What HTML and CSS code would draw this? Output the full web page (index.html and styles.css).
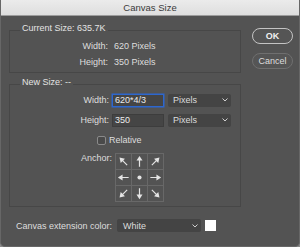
FILE: index.html
```html
<!DOCTYPE html>
<html>
<head>
<meta charset="utf-8">
<link rel="stylesheet" href="styles.css">
</head>
<body>
<div class="window">
  <div class="titlebar">Canvas Size</div>
  <div class="main">
    <div class="left">
      <fieldset class="group current">
        <legend>Current Size: 635.7K</legend>
        <div class="info-row"><span class="lbl">Width:</span><span class="val">620 Pixels</span></div>
        <div class="info-row"><span class="lbl">Height:</span><span class="val">350 Pixels</span></div>
      </fieldset>
      <fieldset class="group newsize">
        <legend>New Size: --</legend>
        <div class="field-row">
          <span class="lbl">Width:</span>
          <div class="input focus">620*4/3</div>
          <div class="select unit"><span>Pixels</span><svg class="chev" viewBox="0 0 6 4" width="6" height="4"><polyline points="0.5,0.5 3,3 5.5,0.5" fill="none" stroke="#cfcfcf" stroke-width="1"/></svg></div>
        </div>
        <div class="field-row">
          <span class="lbl">Height:</span>
          <div class="input">350</div>
          <div class="select unit"><span>Pixels</span><svg class="chev" viewBox="0 0 6 4" width="6" height="4"><polyline points="0.5,0.5 3,3 5.5,0.5" fill="none" stroke="#cfcfcf" stroke-width="1"/></svg></div>
        </div>
        <div class="check-row"><span class="checkbox"></span><span>Relative</span></div>
        <div class="anchor-row">
          <span class="lbl">Anchor:</span>
          <div class="grid">
            <div class="cell"><svg class="arrow r-nw" viewBox="0 0 16 16"><line x1="2.5" y1="8" x2="10" y2="8"/><polygon points="9,4.8 14,8 9,11.2"/></svg></div>
            <div class="cell"><svg class="arrow r-n" viewBox="0 0 16 16"><line x1="2.5" y1="8" x2="10" y2="8"/><polygon points="9,4.8 14,8 9,11.2"/></svg></div>
            <div class="cell"><svg class="arrow r-ne" viewBox="0 0 16 16"><line x1="2.5" y1="8" x2="10" y2="8"/><polygon points="9,4.8 14,8 9,11.2"/></svg></div>
            <div class="cell"><svg class="arrow r-w" viewBox="0 0 16 16"><line x1="2.5" y1="8" x2="10" y2="8"/><polygon points="9,4.8 14,8 9,11.2"/></svg></div>
            <div class="cell"><svg class="arrow" viewBox="0 0 16 16"><circle cx="8" cy="8" r="2.2"/></svg></div>
            <div class="cell"><svg class="arrow" viewBox="0 0 16 16"><line x1="2.5" y1="8" x2="10" y2="8"/><polygon points="9,4.8 14,8 9,11.2"/></svg></div>
            <div class="cell"><svg class="arrow r-sw" viewBox="0 0 16 16"><line x1="2.5" y1="8" x2="10" y2="8"/><polygon points="9,4.8 14,8 9,11.2"/></svg></div>
            <div class="cell"><svg class="arrow r-s" viewBox="0 0 16 16"><line x1="2.5" y1="8" x2="10" y2="8"/><polygon points="9,4.8 14,8 9,11.2"/></svg></div>
            <div class="cell"><svg class="arrow r-se" viewBox="0 0 16 16"><line x1="2.5" y1="8" x2="10" y2="8"/><polygon points="9,4.8 14,8 9,11.2"/></svg></div>
          </div>
        </div>
      </fieldset>
      <div class="ext-row">
        <span class="ext-lbl">Canvas extension color:</span>
        <div class="select ext"><span>White</span><svg class="chev" viewBox="0 0 6 4" width="6" height="4"><polyline points="0.5,0.5 3,3 5.5,0.5" fill="none" stroke="#cfcfcf" stroke-width="1"/></svg></div>
        <span class="swatch"></span>
      </div>
    </div>
    <div class="buttons">
      <button class="btn ok">OK</button>
      <button class="btn cancel">Cancel</button>
    </div>
  </div>
</div>
</body>
</html>
```

FILE: styles.css
```css
html, body {
  margin: 0;
  padding: 0;
  background: #8a8a8a;
}
body {
  font-family: "Liberation Sans", Arial, sans-serif;
  font-size: 9px;
  color: #dedede;
}
.window {
  width: 300px;
  height: 247px;
  box-sizing: border-box;
  background: #535353;
  border: 1px solid #676767;
  border-top: none;
  border-radius: 0 0 5px 5px;
  overflow: hidden;
}
.titlebar {
  height: 15px;
  line-height: 15px;
  text-align: center;
  font-size: 9.5px;
  color: #3a3a3a;
  background: linear-gradient(#ebebeb, #dedede);
  border-bottom: 1px solid #9c9c9c;
  margin: 0 -1px;
}
.main {
  display: flex;
  padding: 7px 0 0 8px;
}
.left {
  width: 232px;
  display: flex;
  flex-direction: column;
}
.group {
  margin: 0;
  padding: 0 6px 2px 10px;
  border: 1px solid #474747;
  min-width: 0;
}
.group legend {
  padding: 0 2px 4px;
  font-size: 9px;
  line-height: 11px;
  color: #e4e4e4;
}
.info-row {
  display: grid;
  grid-template-columns: 88px auto;
  column-gap: 6px;
  height: 15px;
  align-items: center;
  margin-bottom: 1px;
}
.lbl {
  text-align: right;
  white-space: nowrap;
}
.val {
  white-space: nowrap;
}
.newsize {
  margin-top: 4px;
  padding-top: 1px;
  padding-bottom: 4px;
}
.field-row {
  display: grid;
  grid-template-columns: 89px 52px 64px;
  column-gap: 3px;
  height: 14px;
  align-items: center;
  margin-bottom: 6px;
}
.field-row .select {
  margin-left: 1px;
}
.input {
  height: 13px;
  box-sizing: border-box;
  background: #454545;
  border: 1px solid #3d3d3d;
  line-height: 11px;
  padding-left: 2px;
  color: #ececec;
}
.input.focus {
  border-color: #2d67cf;
  box-shadow: 0 0 0 0.5px #2d67cf;
}
.select {
  height: 13px;
  box-sizing: border-box;
  background: #444444;
  border-radius: 2px;
  display: flex;
  align-items: center;
  justify-content: space-between;
  padding: 0 3px 0 5px;
  color: #dcdcdc;
}
.chev {
  display: block;
}
.check-row {
  display: flex;
  align-items: center;
  height: 14px;
  padding-left: 77px;
  margin-bottom: 6px;
  gap: 3px;
}
.checkbox {
  width: 9px;
  height: 9px;
  box-sizing: border-box;
  border: 1px solid #8a8a8a;
  border-radius: 2px;
  background: #4a4a4a;
}
.anchor-row {
  display: grid;
  grid-template-columns: 92px auto;
  column-gap: 3px;
  align-items: start;
}
.anchor-row .lbl {
  line-height: 11px;
}
.grid {
  display: grid;
  grid-template-columns: repeat(3, 15px);
  grid-template-rows: repeat(3, 15px);
  gap: 1px;
  padding: 1px;
  background: #686868;
  width: max-content;
}
.cell {
  background: #535353;
  display: flex;
  align-items: center;
  justify-content: center;
}
.arrow {
  width: 15px;
  height: 15px;
  display: block;
}
.arrow line {
  stroke: #e4e4e4;
  stroke-width: 1.3;
}
.arrow polygon, .arrow circle {
  fill: #e4e4e4;
}
.r-n { transform: rotate(-90deg); }
.r-s { transform: rotate(90deg); }
.r-w { transform: rotate(180deg); }
.r-nw { transform: rotate(-135deg); }
.r-ne { transform: rotate(-45deg); }
.r-sw { transform: rotate(135deg); }
.r-se { transform: rotate(45deg); }
.ext-row {
  display: grid;
  grid-template-columns: 97px 84px 11px;
  column-gap: 4px;
  align-items: center;
  margin-top: 12px;
  padding-left: 7px;
  height: 13px;
}
.ext-lbl {
  white-space: nowrap;
}
.select.ext {
  padding-left: 6px;
}
.swatch {
  width: 11px;
  height: 11px;
  background: #ffffff;
}
.buttons {
  margin-left: 11px;
  padding-top: 5px;
  display: flex;
  flex-direction: column;
  gap: 9px;
  width: 41px;
}
.btn {
  width: 41px;
  height: 16px;
  box-sizing: border-box;
  border-radius: 8px;
  background: #555555;
  font-family: "Liberation Sans", Arial, sans-serif;
  font-size: 9px;
  padding: 0;
  line-height: 13px;
}
.btn.ok {
  border: 1px solid #c4c4c4;
  color: #f0f0f0;
  font-weight: bold;
}
.btn.cancel {
  border: 1px solid #6f6f6f;
  color: #dedede;
}
```
